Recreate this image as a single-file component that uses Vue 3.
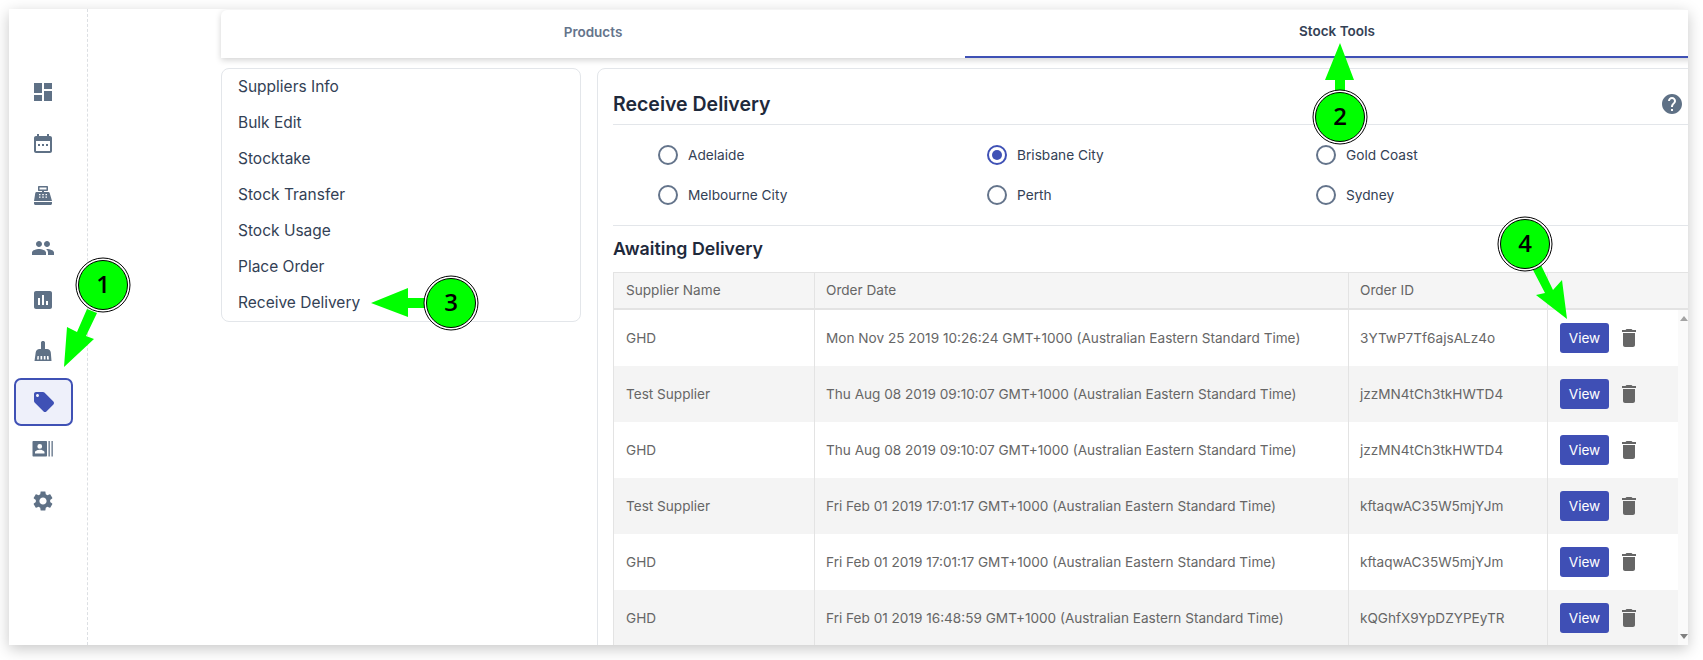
<script setup>
const navIcons = [
  { id: 'dash', d: 'M3 13h8V3H3v10zm0 8h8v-6H3v6zm10 0h8V11h-8v10zm0-18v6h8V3h-8z' },
  { id: 'cal', d: 'M19 4h-1V2h-2v2H8V2H6v2H5c-1.1 0-2 .9-2 2v13c0 1.1.9 2 2 2h14c1.1 0 2-.9 2-2V6c0-1.1-.9-2-2-2zm0 15H5V9h14v10zM8 12H7v2h2v-2H8zm3 0h2v2h-2v-2zm4 0h2v2h-2v-2z' },
  { id: 'till', d: 'M8 2h8c.6 0 1 .4 1 1v3c0 .6-.4 1-1 1h-3v1h4.500c.6 0 1 .4 1.200 1L21 17H3l1.300-8c.2-.6.6-1 1.200-1H11V7H8c-.6 0-1-.4-1-1V3c0-.6.4-1 1-1zm.5 1.500v2h7v-2h-7zM8 10v1.300h1.500V10H8zm3.200 0v1.300h1.600V10h-1.600zm3.300 0v1.300H16V10h-1.500zM8 12.500v1.300h1.500v-1.300H8zm3.200 0v1.300h1.600v-1.300h-1.600zm3.300 0v1.300H16v-1.300h-1.500zM3 18h18v1.500c0 .8-.7 1.500-1.500 1.500h-15c-.8 0-1.500-.7-1.500-1.500V18z' },
  { id: 'people', d: 'M16 11c1.660 0 2.990-1.340 2.990-3S17.660 5 16 5c-1.660 0-3 1.340-3 3s1.340 3 3 3zm-8 0c1.660 0 2.990-1.340 2.990-3S9.660 5 8 5C6.340 5 5 6.340 5 8s1.340 3 3 3zm0 2c-2.330 0-7 1.170-7 3.500V19h14v-2.500c0-2.330-4.670-3.500-7-3.500zm8 0c-.29 0-.62.02-.97.05 1.160.84 1.970 1.970 1.970 3.450V19h6v-2.500c0-2.330-4.670-3.500-7-3.500z' },
  { id: 'chart', d: 'M19 3H5c-1.100 0-2 .9-2 2v14c0 1.100.9 2 2 2h14c1.100 0 2-.9 2-2V5c0-1.100-.9-2-2-2zM9 17H7v-7h2v7zm4 0h-2V7h2v10zm4 0h-2v-4h2v4z' },
  { id: 'broom', d: 'M10 2.500C10 1.700 10.800 1 12 1s2 .7 2 1.500V9h2c2 0 3.500 1.500 3.800 3.500L20.500 21H3.500l1.200-8.500C5 10.500 6.500 9 8.500 9H10V2.500zM6.500 16l-.4 3.500h1.700V16H6.500zm3 0v3.500h1.700V16H9.500zm3.300 0v3.500h1.700V16h-1.700zm3.200 0v3.500h1.900L17.500 16H16z' },
  { id: 'tag', active: true, d: 'M21.410 11.580l-9-9C12.050 2.220 11.550 2 11 2H4c-1.100 0-2 .9-2 2v7c0 .55.22 1.050.59 1.420l9 9c.36.36.86.58 1.410.58.55 0 1.050-.22 1.410-.59l7-7c.37-.36.59-.86.59-1.410 0-.55-.23-1.060-.59-1.420zM5.500 7C4.670 7 4 6.330 4 5.500S4.670 4 5.500 4 7 4.670 7 5.500 6.330 7 5.500 7z' },
  { id: 'contact', d: 'M1.500 5c0-.6.4-1 1-1H15c.6 0 1 .4 1 1v13.500c0 .6-.4 1-1 1H2.500c-.6 0-1-.4-1-1V5zm7.250 2a2.400 2.400 0 1 0 0 4.800 2.400 2.400 0 0 0 0-4.800zM4 16.500h9.500v-1.300c0-1.500-3.200-2.400-4.750-2.400S4 13.700 4 15.200v1.300zM17.500 4h1.300v15.500h-1.300V4zm3 0h1.300v15.500h-1.300V4z' },
  { id: 'gear', d: 'M19.140 12.940c.04-.3.06-.61.06-.94 0-.32-.02-.64-.07-.94l2.030-1.580c.18-.14.23-.41.12-.61l-1.920-3.320c-.12-.22-.37-.29-.59-.22l-2.390.96c-.5-.38-1.030-.7-1.620-.94l-.36-2.540c-.04-.24-.24-.41-.48-.41h-3.840c-.24 0-.43.17-.47.41l-.36 2.540c-.59.24-1.130.57-1.620.94l-2.390-.96c-.22-.08-.47 0-.59.22L2.740 8.870c-.12.21-.08.47.12.61l2.030 1.580c-.05.3-.09.63-.09.94s.02.64.07.94l-2.030 1.580c-.18.14-.23.41-.12.61l1.920 3.320c.12.22.37.29.59.22l2.390-.96c.5.38 1.030.7 1.620.94l.36 2.540c.05.24.24.41.48.41h3.840c.24 0 .44-.17.47-.41l.36-2.540c.59-.24 1.130-.56 1.620-.94l2.390.96c.22.08.47 0 .59-.22l1.920-3.320c.12-.22.07-.47-.12-.61l-2.010-1.580zM12 15.600c-1.980 0-3.600-1.620-3.600-3.600s1.620-3.600 3.600-3.600 3.600 1.620 3.600 3.600-1.620 3.600-3.600 3.600z' }
]

const menu = ['Suppliers Info', 'Bulk Edit', 'Stocktake', 'Stock Transfer', 'Stock Usage', 'Place Order', 'Receive Delivery']

const stores = [
  { name: 'Adelaide' },
  { name: 'Brisbane City', checked: true },
  { name: 'Gold Coast' },
  { name: 'Melbourne City' },
  { name: 'Perth' },
  { name: 'Sydney' }
]

const orders = [
  { supplier: 'GHD', date: 'Mon Nov 25 2019 10:26:24 GMT+1000 (Australian Eastern Standard Time)', id: '3YTwP7Tf6ajsALz4o' },
  { supplier: 'Test Supplier', date: 'Thu Aug 08 2019 09:10:07 GMT+1000 (Australian Eastern Standard Time)', id: 'jzzMN4tCh3tkHWTD4' },
  { supplier: 'GHD', date: 'Thu Aug 08 2019 09:10:07 GMT+1000 (Australian Eastern Standard Time)', id: 'jzzMN4tCh3tkHWTD4' },
  { supplier: 'Test Supplier', date: 'Fri Feb 01 2019 17:01:17 GMT+1000 (Australian Eastern Standard Time)', id: 'kftaqwAC35W5mjYJm' },
  { supplier: 'GHD', date: 'Fri Feb 01 2019 17:01:17 GMT+1000 (Australian Eastern Standard Time)', id: 'kftaqwAC35W5mjYJm' },
  { supplier: 'GHD', date: 'Fri Feb 01 2019 16:48:59 GMT+1000 (Australian Eastern Standard Time)', id: 'kQGhfX9YpDZYPEyTR' }
]

const markers = [
  { n: 1, x: 103, y: 285, arrow: '87,309 97,313 86,336 94,339 64,367 67,327 77,332' },
  { n: 2, x: 1340, y: 117, arrow: '1335,95 1345,95 1345,80 1354,80 1340,43 1325,80 1335,80' },
  { n: 3, x: 451, y: 303, arrow: '428,298 428,308 408,308 408,317 371,303 408,288 408,298' },
  { n: 4, x: 1525, y: 244, arrow: '1533,270 1541,265 1553,290 1562,280 1567,319 1536,295 1545,293' }
]
</script>

<template>
  <div class="shot">
    <div class="window">
      <nav class="sidebar">
        <div v-for="icon in navIcons" :key="icon.id" class="nav-item" :class="{ active: icon.active }">
          <svg viewBox="0 0 24 24" width="24" height="24"><path :d="icon.d" /></svg>
        </div>
      </nav>

      <main class="main">
        <div class="tabs">
          <div class="tab">Products</div>
          <div class="tab selected">Stock Tools</div>
        </div>

        <div class="columns">
          <ul class="menu">
            <li v-for="item in menu" :key="item">{{ item }}</li>
          </ul>

          <section class="panel">
            <div class="panel-head">
              <h2>Receive Delivery</h2>
              <svg class="help" viewBox="0 0 24 24" width="24" height="24"><path d="M12 2C6.480 2 2 6.480 2 12s4.480 10 10 10 10-4.480 10-10S17.520 2 12 2zm1 17h-2v-2h2v2zm2.070-7.750l-.9.920C13.450 12.900 13 13.500 13 15h-2v-.5c0-1.100.45-2.100 1.170-2.830l1.240-1.260c.37-.36.59-.86.59-1.410 0-1.100-.9-2-2-2s-2 .9-2 2H8c0-2.210 1.790-4 4-4s4 1.790 4 4c0 .88-.36 1.680-.93 2.250z" /></svg>
            </div>

            <div class="stores">
              <label v-for="s in stores" :key="s.name" class="store">
                <span class="radio" :class="{ on: s.checked }"></span>
                {{ s.name }}
              </label>
            </div>

            <h3>Awaiting Delivery</h3>

            <div class="table">
              <div class="row head">
                <div>Supplier Name</div>
                <div>Order Date</div>
                <div>Order ID</div>
                <div></div>
              </div>
              <div class="body">
                <div class="rows">
                  <div v-for="(o, i) in orders" :key="i" class="row">
                    <div>{{ o.supplier }}</div>
                    <div>{{ o.date }}</div>
                    <div>{{ o.id }}</div>
                    <div class="actions">
                      <button>View</button>
                      <svg viewBox="0 0 24 24" width="24" height="24"><path d="M6 19c0 1.100.9 2 2 2h8c1.100 0 2-.9 2-2V7H6v12zM19 4h-3.500l-1-1h-5l-1 1H5v2h14V4z" /></svg>
                    </div>
                  </div>
                </div>
                <div class="scrollbar">
                  <span class="up"></span>
                  <span class="down"></span>
                </div>
              </div>
            </div>
          </section>
        </div>
      </main>
    </div>

    <svg class="markers" width="1703" height="660" viewBox="0 0 1703 660">
      <g v-for="m in markers" :key="m.n">
        <polygon :points="m.arrow" fill="#00ff00" />
        <circle :cx="m.x" :cy="m.y" r="27" fill="#fff" stroke="#000" stroke-width="1" />
        <circle :cx="m.x" :cy="m.y" r="24.500" fill="#00ff00" stroke="#000" stroke-width="1" />
        <text :x="m.x" :y="m.y + 8" text-anchor="middle">{{ m.n }}</text>
      </g>
    </svg>
  </div>
</template>

<style>
html, body {
  margin: 0;
  background: #fff;
}
</style>

<style scoped>
.shot {
  position: relative;
  width: 1703px;
  height: 660px;
  padding: 9px 15px 15px 9px;
  box-sizing: border-box;
  overflow: hidden;
  font-family: Inter, "Liberation Sans", sans-serif;
}
.window {
  display: flex;
  height: 636px;
  background: #fff;
  overflow: hidden;
  box-shadow: 0 4px 14px rgba(0, 0, 0, 0.22);
}
.sidebar {
  flex: none;
  width: 78px;
  border-right: 1px dashed #dcdfe3;
  padding-top: 57px;
  display: flex;
  flex-direction: column;
  align-items: flex-start;
}
.nav-item {
  height: 52px;
  width: 60px;
  margin-left: 4px;
  display: flex;
  align-items: center;
  justify-content: center;
  flex: none;
}
.nav-item svg {
  fill: #5f7186;
}
.nav-item.active {
  box-sizing: border-box;
  height: 48px;
  width: 59px;
  margin: 0 0 -3px 5px;
  border: 2px solid #3f51b5;
  border-radius: 7px;
  background: #eef0fa;
}
.nav-item.active svg {
  fill: #3f51b5;
}
.main {
  flex: none;
  width: 1488px;
  margin-left: 133px;
}
.tabs {
  display: grid;
  grid-template-columns: 744px 744px;
  height: 48px;
  margin-top: 1px;
  border-radius: 6px 0 0 0;
  box-shadow: 0 2px 6px rgba(0, 0, 0, 0.18);
}
.tab {
  display: flex;
  align-items: center;
  justify-content: center;
  font-size: 13.5px;
  font-weight: 600;
  color: #64748b;
  padding-bottom: 4px;
  box-sizing: border-box;
}
.tab.selected {
  color: #334155;
  border-bottom: 2px solid #3f51b5;
}
.columns {
  display: flex;
  gap: 16px;
  align-items: flex-start;
  margin-top: 10px;
}
.menu {
  flex: none;
  width: 360px;
  box-sizing: border-box;
  margin: 0;
  padding: 0;
  list-style: none;
  border: 1px solid #e3e6ea;
  border-radius: 8px;
}
.menu li {
  height: 36px;
  line-height: 36px;
  padding-left: 16px;
  font-size: 15.5px;
  color: #334155;
}
.panel {
  flex: none;
  width: 1112px;
  box-sizing: border-box;
  height: 600px;
  border: 1px solid #e3e6ea;
  border-radius: 8px;
  padding-left: 15px;
}
.panel-head {
  display: flex;
  align-items: center;
  justify-content: space-between;
  box-sizing: border-box;
  height: 56px;
  padding: 15px 24px 0 0;
  border-bottom: 1px solid #e3e6ea;
}
.panel-head h2 {
  margin: 0;
  font-size: 19.5px;
  font-weight: 600;
  color: #1e293b;
  white-space: nowrap;
}
.help {
  fill: #5f7186;
}
.stores {
  display: grid;
  grid-template-columns: repeat(3, 329px);
  grid-auto-rows: 40px;
  padding: 10px 0 10px 45px;
  border-bottom: 1px solid #e3e6ea;
}
.store {
  display: flex;
  align-items: center;
  gap: 10px;
  font-size: 13.7px;
  color: #334155;
}
.radio {
  flex: none;
  width: 20px;
  height: 20px;
  box-sizing: border-box;
  border: 2px solid #64748b;
  border-radius: 50%;
  display: flex;
  align-items: center;
  justify-content: center;
}
.radio.on {
  border-color: #3f51b5;
}
.radio.on::after {
  content: "";
  width: 10px;
  height: 10px;
  border-radius: 50%;
  background: #3f51b5;
}
h3 {
  margin: 0;
  height: 46px;
  line-height: 45px;
  font-size: 17.8px;
  font-weight: 600;
  color: #1e293b;
}
.table {
  border-left: 1px solid #e3e3e3;
  font-size: 13.6px;
  color: #666;
}
.row {
  display: grid;
  grid-template-columns: 201px 534px 199px 1fr;
  height: 56px;
  align-items: stretch;
}
.row > div {
  display: flex;
  align-items: center;
  padding-left: 11px;
  border-right: 1px solid #e3e3e3;
}
.row > div:last-child {
  border-right: 0;
}
.row > div:first-child {
  padding-left: 12px;
}
.head {
  height: 38px;
  box-sizing: border-box;
  background: #f5f5f5;
  border-top: 1px solid #e3e3e3;
  border-bottom: 2px solid #e3e3e3;
}
.head > div {
  padding-bottom: 2px;
}
.body {
  display: flex;
  width: 1075px;
}
.rows {
  width: 1064px;
  flex: none;
}
.rows .row:nth-child(even) {
  background: #f4f4f4;
}
.actions {
  gap: 8px;
}
.actions.actions {
  padding-left: 12px;
}
.actions button {
  width: 49px;
  height: 30px;
  border: 0;
  border-radius: 3px;
  background: #3f4fb5;
  color: #fff;
  font: inherit;
  padding: 0;
}
.actions svg {
  fill: #666;
}
.scrollbar {
  flex: none;
  width: 11px;
  background: #fafafa;
  position: relative;
}
.scrollbar span {
  position: absolute;
  left: 2px;
  width: 0;
  height: 0;
  border-left: 4px solid transparent;
  border-right: 4px solid transparent;
}
.up {
  top: 6px;
  border-bottom: 5px solid #a3a3a3;
}
.down {
  top: 324px;
  border-top: 5px solid #808080;
}
.markers {
  position: absolute;
  left: 0;
  top: 0;
  pointer-events: none;
}
.markers text {
  font-family: "Open Sans", sans-serif;
  font-size: 24px;
  font-weight: 600;
  fill: #000;
}
</style>
